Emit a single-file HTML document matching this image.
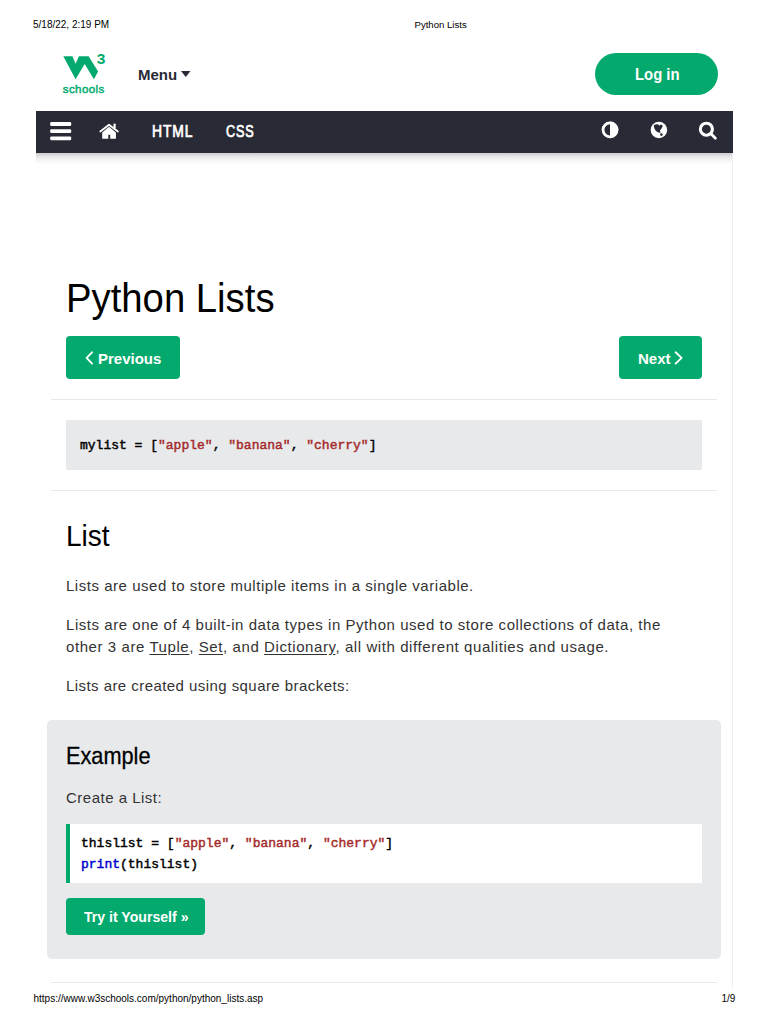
<!DOCTYPE html>
<html><head><meta charset="utf-8">
<style>
*{margin:0;padding:0;box-sizing:border-box}
html,body{width:768px;height:1024px;background:#fff;overflow:hidden}
body{position:relative;font-family:"Liberation Sans",sans-serif;color:#000}
.a{position:absolute;white-space:nowrap}
.small{font-size:10px;color:#000;line-height:1}
.btn{position:absolute;background:#04AA6D;color:#fff;font-weight:bold}
.hr{position:absolute;height:1px;background:#e8e9ea;left:51px;width:666px}
.mono{font-family:"Liberation Mono",monospace;font-weight:normal;-webkit-text-stroke:0.45px currentColor;font-size:13px;line-height:1}
u{text-underline-offset:2px}
.str{color:#a52a2a}
.kw{color:#0000cd}
.p{font-size:15px;color:#333;line-height:1;letter-spacing:0.5px}
</style></head><body>
<!-- print header -->
<div class="a small" id="date" style="left:33px;top:19.5px;font-size:10px">5/18/22, 2:19 PM</div>
<div class="a small" id="ttl" style="left:414.5px;top:19.7px;font-size:9.6px">Python Lists</div>

<!-- logo -->
<svg class="a" style="left:0;top:0" width="120" height="100" viewBox="0 0 120 100">
<path d="M63.3 56.2 L72.4 56.2 L75.6 63.7 L78.9 56.2 L88.6 56.2 L98.1 71.5 L93.9 79.3 L84.7 64 L75.6 79.3 Z" fill="#04AA6D"/>
</svg>
<div class="a" id="three" style="left:96.8px;top:50.6px;font-size:15.5px;font-weight:bold;color:#04AA6D;line-height:1">3</div>
<div class="a" id="schools" style="left:62.8px;top:83.2px;font-size:11.6px;font-weight:normal;-webkit-text-stroke:0.45px #04AA6D;color:#04AA6D;line-height:1;letter-spacing:0.35px">schools</div>

<div class="a" id="menu" style="left:138px;top:66.6px;font-size:15px;font-weight:bold;color:#282A35;line-height:1">Menu</div>
<svg class="a" style="left:181px;top:71px" width="10" height="6"><path d="M0 0H9.5L4.75 6Z" fill="#282A35"/></svg>

<div class="btn" id="login" style="left:595px;top:53px;width:123px;height:42px;border-radius:21px"></div>
<div class="a" id="logintxt" style="left:635px;top:66.1px;font-size:16.5px;font-weight:bold;color:#fff;line-height:1;transform-origin:0 0;transform:scaleX(0.9)">Log in</div>

<!-- navbar -->
<div class="a" style="left:36px;top:111px;width:697px;height:42px;background:#282A35;"></div>
<div class="a" style="left:36px;top:153px;width:697px;height:12px;background:linear-gradient(rgba(40,42,53,0.24),rgba(40,42,53,0.1) 35%,rgba(40,42,53,0.03) 70%,rgba(40,42,53,0))"></div>

<!-- right vertical line -->
<div class="a" style="left:732px;top:153px;width:1px;height:835px;background:#efefef"></div>

<!-- h1 -->
<div class="a" id="h1" style="left:66px;top:277.7px;font-size:40px;color:#000;line-height:1;transform-origin:0 0;transform:scaleX(0.957)">Python Lists</div>

<!-- prev / next -->
<div class="btn" style="left:66px;top:336px;width:114px;height:43px;border-radius:4px"></div>
<div class="btn" style="left:619px;top:336px;width:83px;height:43px;border-radius:4px"></div>

<div class="hr" style="top:399px"></div>
<div class="a" style="left:66px;top:420px;width:636px;height:50px;background:#E7E9EB"></div>
<div class="a mono" id="code1" style="left:80px;top:438.9px">mylist = [<span class="str">"apple"</span>, <span class="str">"banana"</span>, <span class="str">"cherry"</span>]</div>
<div class="hr" style="top:490px"></div>

<div class="a" id="h2" style="left:66.2px;top:520.9px;font-size:30px;line-height:1;transform-origin:0 0;transform:scaleX(0.935)">List</div>

<!-- example -->
<div class="a" style="left:47px;top:720px;width:674px;height:239px;background:#E7E9EB;border-radius:5px"></div>
<div class="a" style="left:66px;top:824px;width:636px;height:59px;background:#fff;border-left:4px solid #04AA6D"></div>
<div class="btn" style="left:66px;top:898px;width:139px;height:37px;border-radius:4px"></div>



<!-- nav icons -->
<svg class="a" style="left:0;top:100px" width="768" height="60" viewBox="0 100 768 60">
<g fill="#fff"><rect x="50.2" y="122.1" width="21" height="3.8" rx="1.2"/><rect x="50.2" y="129.2" width="21" height="3.8" rx="1.2"/><rect x="50.2" y="136.4" width="21" height="3.8" rx="1.2"/></g>
<g fill="#fff">
<path d="M100.3 131.5 L109 124.7 L117.9 131.5" fill="none" stroke="#fff" stroke-width="1.8" stroke-linecap="round" stroke-linejoin="round"/>
<rect x="113.5" y="123.7" width="2.2" height="4.6"/>
<path d="M102.2 132.6 L109 126.8 L115.9 132.6 L115.9 138.7 L110.2 138.7 L110.2 134.8 L108.3 134.8 L108.3 138.7 L102.2 138.7 Z"/>
</g>
<circle cx="610" cy="129.85" r="7" fill="none" stroke="#fff" stroke-width="2.8"/>
<path d="M610 121.5 A8.35 8.35 0 0 1 610 138.2 Z" fill="#fff"/>
<circle cx="658.9" cy="130" r="8.3" fill="#fff"/>
<path d="M653.8 125.3 C655 124.3 657 123.9 658.3 124.5 L659.2 125.8 L660.3 124.8 C661.3 124.7 662.3 125.1 662.8 125.9 C662.2 127.6 661 129.3 659.8 130.6 L660.8 132.6 C658.8 133 656.6 131.8 655.4 130.2 C654.3 128.8 653.8 127 653.8 125.3 Z" fill="#282A35"/>
<circle cx="661.4" cy="134.6" r="1.3" fill="#282A35"/>
<circle cx="706.4" cy="129.2" r="6" fill="none" stroke="#fff" stroke-width="3.1"/>
<line x1="711.2" y1="134" x2="715.4" y2="138.2" stroke="#fff" stroke-width="2.8" stroke-linecap="round"/>
</svg>
<!-- chevrons -->
<svg class="a" style="left:0;top:340px" width="768" height="30" viewBox="0 340 768 30">
<path d="M92.1 352.3 L86.6 357.9 L92.1 363.6" fill="none" stroke="#fff" stroke-width="1.9" stroke-linecap="round" stroke-linejoin="round"/>
<path d="M675.6 352.3 L681.6 357.9 L675.6 363.6" fill="none" stroke="#fff" stroke-width="1.9" stroke-linecap="round" stroke-linejoin="round"/>
</svg>
<!-- nav items -->
<div class="a" id="nav-html" style="left:152px;top:124px;font-size:15.8px;font-weight:normal;-webkit-text-stroke:0.7px #fff;color:#fff;line-height:1;letter-spacing:1px;transform-origin:0 0;transform:scaleX(0.88)">HTML</div>
<div class="a" id="nav-css" style="left:225.5px;top:124px;font-size:15.8px;font-weight:normal;-webkit-text-stroke:0.7px #fff;color:#fff;line-height:1;letter-spacing:1px;transform-origin:0 0;transform:scaleX(0.8)">CSS</div>

<!-- button text -->
<div class="a" id="prevtxt" style="left:98px;top:351.2px;font-size:15px;font-weight:bold;color:#fff;line-height:1">Previous</div>
<div class="a" id="nexttxt" style="left:638px;top:351.2px;font-size:15px;font-weight:bold;color:#fff;line-height:1">Next</div>

<!-- paragraphs -->
<div class="a p" id="p1" style="left:66px;top:577.6px;letter-spacing:0.53px">Lists are used to store multiple items in a single variable.</div>
<div class="a p" id="p2a" style="left:66px;top:617.2px;letter-spacing:0.54px">Lists are one of 4 built-in data types in Python used to store collections of data, the</div>
<div class="a p" id="p2b" style="left:66px;top:638.8px;letter-spacing:0.58px">other 3 are <u>Tuple</u>, <u>Set</u>, and <u>Dictionary</u>, all with different qualities and usage.</div>
<div class="a p" id="p3" style="left:66px;top:678.4px;letter-spacing:0.44px">Lists are created using square brackets:</div>

<div class="a" id="h2ex" style="left:66px;top:744.3px;font-size:24px;line-height:1;-webkit-text-stroke:0.3px #000;transform-origin:0 0;transform:scaleX(0.905)">Example</div>
<div class="a p" id="create" style="left:66px;top:790px">Create a List:</div>
<div class="a mono" id="code2" style="left:81px;top:836.8px">thislist = [<span class="str">"apple"</span>, <span class="str">"banana"</span>, <span class="str">"cherry"</span>]</div>
<div class="a mono" id="code3" style="left:81px;top:857.5px"><span class="kw">print</span>(thislist)</div>
<div class="a" id="trytxt" style="left:84px;top:909px;font-size:15px;font-weight:bold;color:#fff;line-height:1;transform-origin:0 0;transform:scaleX(0.94)">Try it Yourself &raquo;</div>
<div class="hr" style="top:982px"></div>
<div class="a small" id="url" style="left:33.5px;top:994px;font-size:10px">https://www.w3schools.com/python/python_lists.asp</div>
<div class="a small" id="pg" style="left:721.5px;top:993.6px;font-size:10px">1/9</div>
</body></html>
